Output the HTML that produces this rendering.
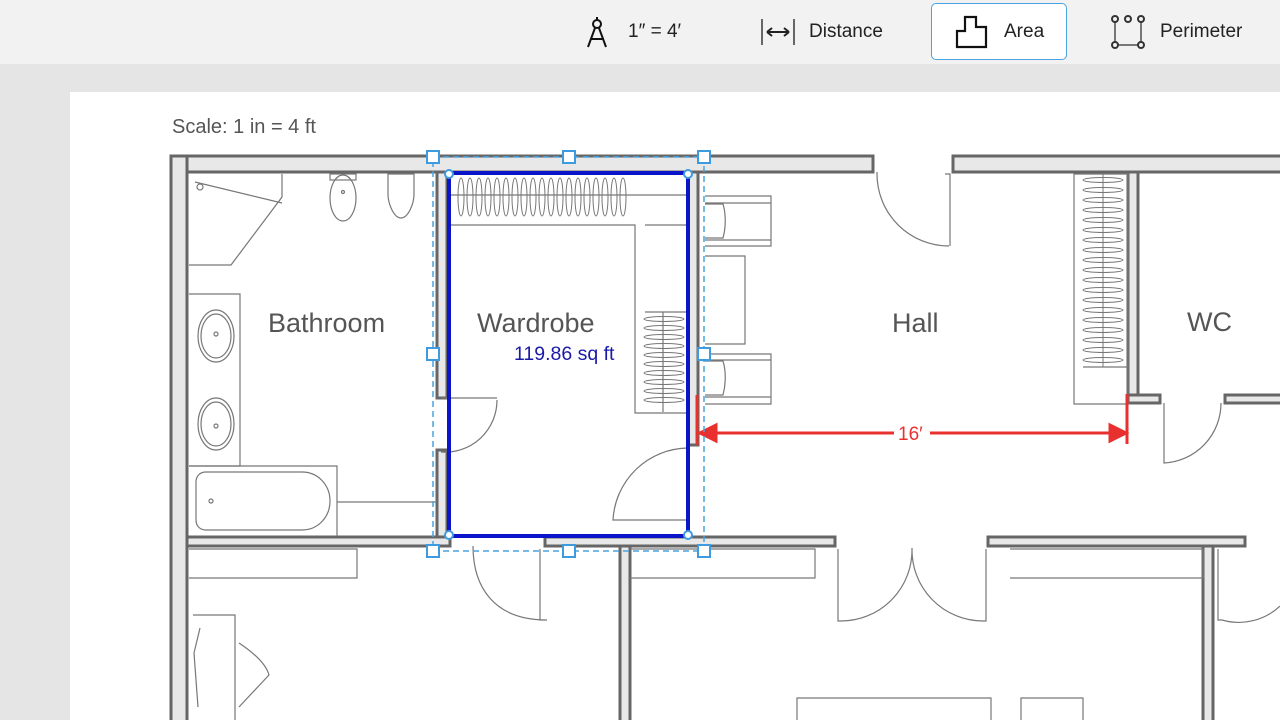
<!DOCTYPE html>
<html><head><meta charset="utf-8"><style>
body{margin:0;width:1280px;height:720px;overflow:hidden;background:#e5e5e5;font-family:"Liberation Sans",sans-serif;position:relative}
.tb{position:absolute;left:0;top:0;width:1280px;height:64px;background:#f2f2f2}
.it{position:absolute;top:0;height:64px;display:flex;align-items:center;font-size:19px;color:#222}
.page{position:absolute;left:70px;top:92px;width:1210px;height:628px;background:#fff}
</style></head><body>
<div class="tb">
 <div class="it" style="left:582px"><svg width="30" height="34" viewBox="0 0 30 34" fill="none" stroke="#111" stroke-width="2"><circle cx="15" cy="9" r="4"/><path d="M15 2v3M13 13L6 32M17 13l7 19M8 24h14"/></svg><span style="margin-left:16px">1″ = 4′</span></div>
 <div class="it" style="left:760px"><svg width="36" height="30" viewBox="0 0 36 30" fill="none" stroke="#222" stroke-width="2"><path d="M2 2v26M34 2v26" stroke="#666"/><path d="M7 15h22M7 15l5-4M7 15l5 4M29 15l-5-4M29 15l-5 4"/></svg><span style="margin-left:13px">Distance</span></div>
 <div style="position:absolute;left:931px;top:3px;width:134px;height:55px;border:1.5px solid #4aa3df;border-radius:5px;background:#fff"></div>
 <div class="it" style="left:955px"><svg width="34" height="34" viewBox="0 0 34 34" fill="none" stroke="#111" stroke-width="2.2"><path d="M10 2h11v10h10v20H2V16h8z"/></svg><span style="margin-left:15px">Area</span></div>
 <div class="it" style="left:1111px"><svg width="34" height="34" viewBox="0 0 34 34" fill="none" stroke="#333" stroke-width="2"><path d="M4 7v20M30 7v20M7 30h20" stroke="#777"/><circle cx="4" cy="4" r="3"/><circle cx="17" cy="4" r="3"/><circle cx="30" cy="4" r="3"/><circle cx="4" cy="30" r="3"/><circle cx="30" cy="30" r="3"/></svg><span style="margin-left:15px">Perimeter</span></div>
</div>
<div class="page"></div>
<svg style="position:absolute;left:0;top:0" width="1280" height="720" viewBox="0 0 1280 720">
<text x="172" y="133" font-size="20" fill="#555" font-family="Liberation Sans">Scale: 1 in = 4 ft</text>
<g fill="#e8e8e8" stroke="#666" stroke-width="3">
<rect x="171" y="156" width="702" height="16"/>
<rect x="953" y="156" width="340" height="16"/>
<rect x="171" y="156" width="16" height="580"/>
<rect x="437" y="172" width="10" height="226"/>
<rect x="437" y="450" width="10" height="87"/>
<rect x="688" y="172" width="10" height="273"/>
<rect x="187" y="537" width="263" height="9"/>
<rect x="545" y="537" width="290" height="9"/>
<rect x="988" y="537" width="257" height="9"/>
<rect x="620" y="546" width="10" height="190"/>
<rect x="1203" y="546" width="10" height="190"/>
<rect x="1128" y="172" width="10" height="231"/>
<rect x="1128" y="395" width="32" height="8"/>
<rect x="1225" y="395" width="60" height="8"/>
</g>
<g fill="none" stroke="#777" stroke-width="1.2">
<path d="M189 265h42l51-68v-23M195 182l87 21"/>
<circle cx="200" cy="187" r="3"/>
<ellipse cx="343" cy="198" rx="13" ry="23"/><rect x="330" y="174" width="26" height="6"/><circle cx="343" cy="192" r="1.5"/>
<path d="M388 174h26v20c0 10-6 24-13 24s-13-14-13-24z"/>
<path d="M189 294h51v172h-51"/>
<ellipse cx="216" cy="336" rx="18" ry="26"/><ellipse cx="216" cy="336" rx="15" ry="22"/><circle cx="216" cy="334" r="2"/>
<ellipse cx="216" cy="424" rx="18" ry="26"/><ellipse cx="216" cy="424" rx="15" ry="22"/><circle cx="216" cy="426" r="2"/>
<path d="M189 466h148v70"/><path d="M337 502h100"/>
<path d="M206 472h96c16 0 28 13 28 29s-12 29-28 29h-96c-6 0-10-4-10-10v-38c0-6 4-10 10-10z"/><circle cx="211" cy="501" r="2"/>
<path d="M450 225h185v188h52M450 195h238M645 225h43v188M645 312h43M663 312v100"/>
<path d="M441 398h56M497 400a52 52 0 0 1-56 52M687 448a76 76 0 0 0-74 72h74"/>
<path d="M705 196h66v50h-66M705 203h66M705 240h66M705 256h40v88h-40M705 354h66v50h-66M705 360h66M705 397h66"/>
<path d="M705 204h18c3 10 3 23 0 34h-18M705 361h18c3 10 3 23 0 34h-18"/>
<path d="M877 172v2a72 72 0 0 0 72 72M945 174h5v72"/>
<path d="M1074 174h54v230h-54zM1083 367h45"/>
<path d="M1164 403v60a60 60 0 0 0 57-60"/>
<path d="M189 549h168v29H189M473 546c0 40 20 74 74 74M540 549v71h7M630 549h185v29H630"/>
<path d="M838 549v72h3a71 71 0 0 0 71-73a71 71 0 0 0 71 73h3v-72"/>
<path d="M1010 549h193v29h-193M1218 549v71h4a60 60 0 0 0 58-14"/>
<path d="M193 615h42v105M200 628l-6 25 4 54M239 643c15 10 27 21 30 32l-30 32"/>
<path d="M797 720v-22h194v22M1021 720v-22h62v22"/>
</g>
<g stroke="#777" fill="none" stroke-width="1">
<g id="h"><ellipse cx="461" cy="197" rx="3" ry="19"/></g>
<use href="#h" x="9"/><use href="#h" x="18"/><use href="#h" x="27"/><use href="#h" x="36"/><use href="#h" x="45"/><use href="#h" x="54"/><use href="#h" x="63"/><use href="#h" x="72"/><use href="#h" x="81"/><use href="#h" x="90"/><use href="#h" x="99"/><use href="#h" x="108"/><use href="#h" x="117"/><use href="#h" x="126"/><use href="#h" x="135"/><use href="#h" x="144"/><use href="#h" x="153"/><use href="#h" x="162"/>
<g id="v"><ellipse cx="664" cy="319" rx="20" ry="2.5"/></g>
<use href="#v" y="9"/><use href="#v" y="18"/><use href="#v" y="27"/><use href="#v" y="36"/><use href="#v" y="45"/><use href="#v" y="54"/><use href="#v" y="63"/><use href="#v" y="72"/><use href="#v" y="81"/>
<g id="w"><ellipse cx="1103" cy="180" rx="20" ry="2.5"/></g>
<use href="#w" y="10"/><use href="#w" y="20"/><use href="#w" y="30"/><use href="#w" y="40"/><use href="#w" y="50"/><use href="#w" y="60"/><use href="#w" y="70"/><use href="#w" y="80"/><use href="#w" y="90"/><use href="#w" y="100"/><use href="#w" y="110"/><use href="#w" y="120"/><use href="#w" y="130"/><use href="#w" y="140"/><use href="#w" y="150"/><use href="#w" y="160"/><use href="#w" y="170"/><use href="#w" y="180"/>
<path d="M1103 174v193M457 195h172"/>
</g>
<g font-family="Liberation Sans" font-size="27" fill="#555">
<text x="268" y="332">Bathroom</text><text x="477" y="332">Wardrobe</text><text x="892" y="332">Hall</text><text x="1187" y="331">WC</text>
</g>
<text x="514" y="360" font-size="19.5" fill="#1a1aa8" font-family="Liberation Sans">119.86 sq ft</text>
<g stroke="#e8302f" stroke-width="3" fill="#e8302f">
<path d="M697 395v50M1127 394v50"/>
<path d="M712 433h182M930 433h180"/>
<path d="M700 433l16-8v16zM1126 433l-16-8v16z"/>
</g>
<text x="898" y="440" font-size="19" fill="#e8302f" font-family="Liberation Sans">16′</text>
<rect x="433" y="157" width="271" height="394" fill="none" stroke="#4aa3df" stroke-width="1.5" stroke-dasharray="6 4"/>
<rect x="449" y="173" width="239" height="363" fill="none" stroke="#0a14c8" stroke-width="4"/>
<g fill="#fff" stroke="#3f9be0" stroke-width="2">
<circle cx="449" cy="174" r="4"/><circle cx="688" cy="174" r="4"/><circle cx="449" cy="535" r="4"/><circle cx="688" cy="535" r="4"/>
<rect x="427" y="151" width="12" height="12"/><rect x="563" y="151" width="12" height="12"/><rect x="698" y="151" width="12" height="12"/>
<rect x="427" y="348" width="12" height="12"/><rect x="698" y="348" width="12" height="12"/>
<rect x="427" y="545" width="12" height="12"/><rect x="563" y="545" width="12" height="12"/><rect x="698" y="545" width="12" height="12"/>
</g>
</svg>
</body></html>
